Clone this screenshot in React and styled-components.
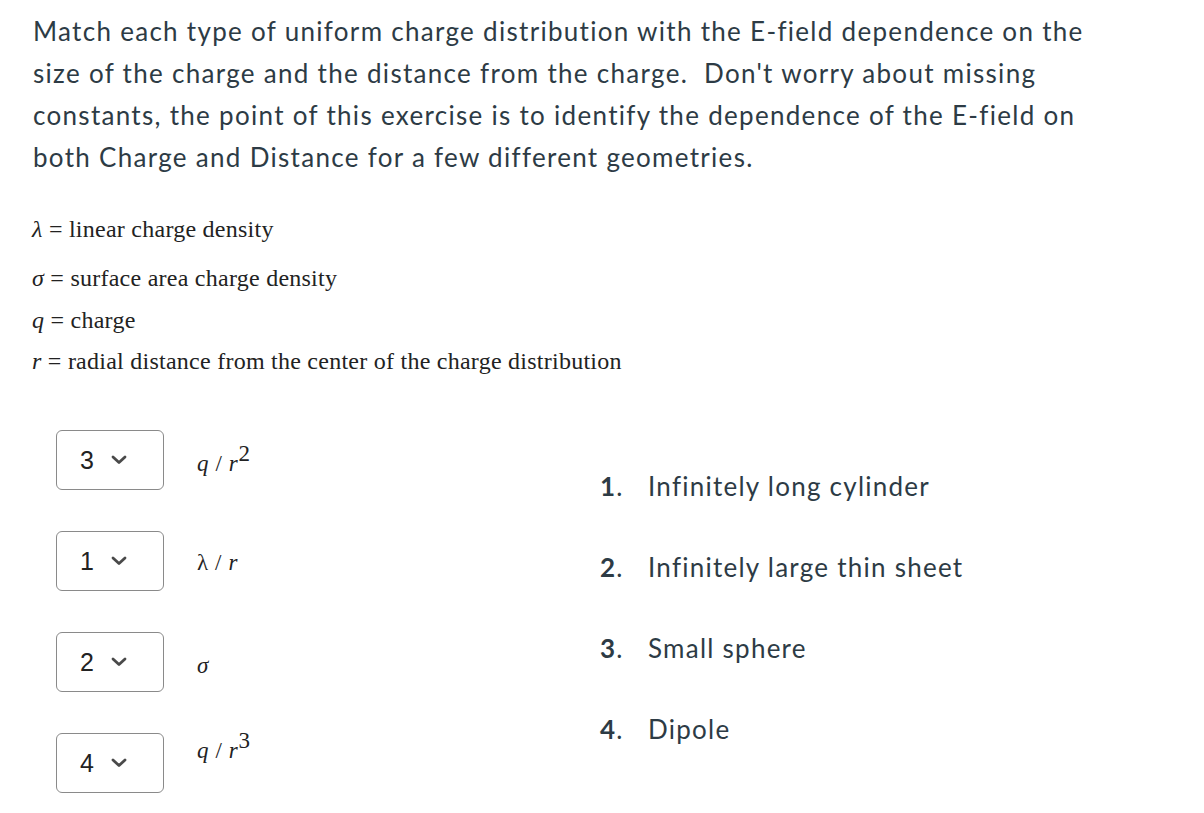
import React from 'react';
import styled, { createGlobalStyle } from 'styled-components';

const Global = createGlobalStyle`
  body {
    margin: 0;
    background: #fff;
  }
`;

const Page = styled.div`
  padding: 10px 0 0 33px;
  color: #2d3b45;
  font-family: Lato, "Open Sans", sans-serif;
  font-variant-ligatures: none;
`;

const Intro = styled.p`
  margin: 0;
  width: 1090px;
  font-size: 26px;
  line-height: 42px;
  letter-spacing: 1.3px;
`;

const Defs = styled.div`
  margin-top: 35px;
  margin-left: -1px;
  font-family: "Liberation Serif", "Times New Roman", serif;
  font-size: 24px;
  letter-spacing: 0.25px;
  color: #222;
`;

const Def = styled.div`
  height: ${p => p.h}px;
  line-height: 32px;
`;

const Sym = styled.i`
  font-family: "Liberation Serif", "DejaVu Serif", serif;
  font-style: italic;
`;

const Match = styled.div`
  display: flex;
  margin-top: 53px;
`;

const LeftCol = styled.div`
  display: flex;
  flex-direction: column;
  gap: 41px;
  margin-left: 23px;
  width: 544px;
`;

const Row = styled.div`
  display: flex;
  align-items: center;
  gap: 33px;
  height: 60px;
`;

const Select = styled.div`
  box-sizing: border-box;
  width: 108px;
  height: 60px;
  border: 1px solid #8a8a8a;
  border-radius: 6px;
  display: flex;
  align-items: center;
  padding-left: 23px;
  gap: 17px;
  font-family: "Liberation Sans", Arial, sans-serif;
  font-size: 25px;
  color: #222;
  background: #fff;
  svg {
    flex-shrink: 0;
    display: block;
  }
`;

const Formula = styled.span`
  font-family: "Liberation Serif", "Times New Roman", serif;
  font-size: 23px;
  letter-spacing: 0.6px;
  color: #222;
  position: relative;
  top: ${p => p.shift || 0}px;
  sup {
    font-size: 23px;
    font-style: normal;
    vertical-align: 0;
    position: relative;
    top: -10px;
  }
`;

const RightCol = styled.ol`
  list-style: none;
  margin: 35px 0 0;
  padding: 0;
  display: flex;
  flex-direction: column;
  gap: 39px;
`;

const Item = styled.li`
  display: flex;
  font-size: 26px;
  line-height: 42px;
  letter-spacing: 1.25px;
  color: #2d3b45;
`;

const Num = styled.span`
  width: 48px;
  b {
    font-weight: 700;
  }
`;

const Chevron = () => (
  <svg width="16" height="12" viewBox="0 0 16 12">
    <path d="M2 3 L8 8.6 L14 3" fill="none" stroke="#4a4a4a" strokeWidth="2.8" strokeLinecap="round" strokeLinejoin="round" />
  </svg>
);

const rows = [
  { v: '3', f: <><Sym>q</Sym> / <Sym>r</Sym><sup>2</sup></>, shift: 4 },
  { v: '1', f: <>λ / <Sym>r</Sym></>, shift: 2 },
  { v: '2', f: <Sym>σ</Sym>, shift: 4 },
  { v: '4', f: <><Sym>q</Sym> / <Sym>r</Sym><sup>3</sup></>, shift: -12 },
];

const items = ['Infinitely long cylinder', 'Infinitely large thin sheet', 'Small sphere', 'Dipole'];

export default function App() {
  return (
    <Page>
      <Global />
      <Intro>
        Match each type of uniform charge distribution with the E-field dependence on the
        size of the charge and the distance from the charge.&nbsp; Don't worry about missing
        constants, the point of this exercise is to identify the dependence of the E-field on
        both Charge and Distance for a few different geometries.
      </Intro>
      <Defs>
        <Def h={49}><Sym>λ</Sym> = linear charge density</Def>
        <Def h={42}><Sym>σ</Sym> = surface area charge density</Def>
        <Def h={41}><Sym>q</Sym> = charge</Def>
        <Def h={32}><Sym>r</Sym> = radial distance from the center of the charge distribution</Def>
      </Defs>
      <Match>
        <LeftCol>
          {rows.map(r => (
            <Row key={r.v}>
              <Select>
                <span>{r.v}</span>
                <Chevron />
              </Select>
              <Formula shift={r.shift}>{r.f}</Formula>
            </Row>
          ))}
        </LeftCol>
        <RightCol>
          {items.map((t, i) => (
            <Item key={t}>
              <Num><b>{i + 1}</b>.</Num>
              <span>{t}</span>
            </Item>
          ))}
        </RightCol>
      </Match>
    </Page>
  );
}
